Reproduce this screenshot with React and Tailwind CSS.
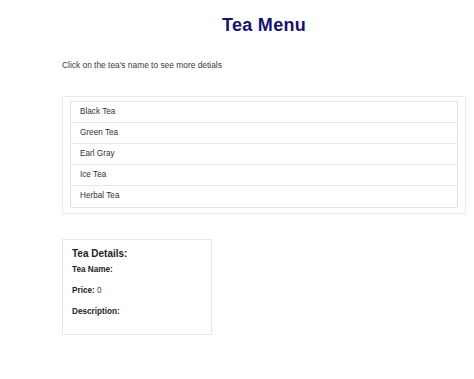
export default function App() {
  const teas = ['Black Tea', 'Green Tea', 'Earl Gray', 'Ice Tea', 'Herbal Tea']

  return (
    <div className="min-h-[379px] w-full bg-white font-['Liberation_Sans',Arial,sans-serif] text-[#333]">
      <div className="ml-[62px] w-[404px]">
        <h1 className="pt-[14px] text-center text-[18px] font-bold leading-[22px] tracking-[0.3px] text-[#14126e]">
          Tea Menu
        </h1>
        <p className="mt-[24px] text-[8.4px] leading-[10px] text-[#3a3a3a]">
          Click on the tea's name to see more detials
        </p>

        <div className="mt-[26px] border border-[#ececec] px-[7px] pt-[4px] pb-[5px]">
          <ul className="divide-y divide-[#e6e6e6] border border-[#e2e2e2]">
            {teas.map((tea) => (
              <li key={tea} className="flex h-[21px] cursor-pointer items-center pl-[9px] text-[8.2px]">
                {tea}
              </li>
            ))}
          </ul>
        </div>

        <div className="mt-[25px] h-[96px] w-[150px] border border-[#e6e6e6] pl-[9px] pt-[8px]">
          <h3 className="text-[10px] font-bold leading-[12px] text-[#222]">Tea Details:</h3>
          <p className="mt-[5px] text-[8.2px] leading-[10px] text-[#222]">
            <b>Tea Name:</b>
          </p>
          <p className="mt-[11px] text-[8.2px] leading-[10px] text-[#222]">
            <b>Price:</b> <span className="text-[#444]">0</span>
          </p>
          <p className="mt-[11px] text-[8.2px] leading-[10px] text-[#222]">
            <b>Description:</b>
          </p>
        </div>
      </div>
    </div>
  )
}
